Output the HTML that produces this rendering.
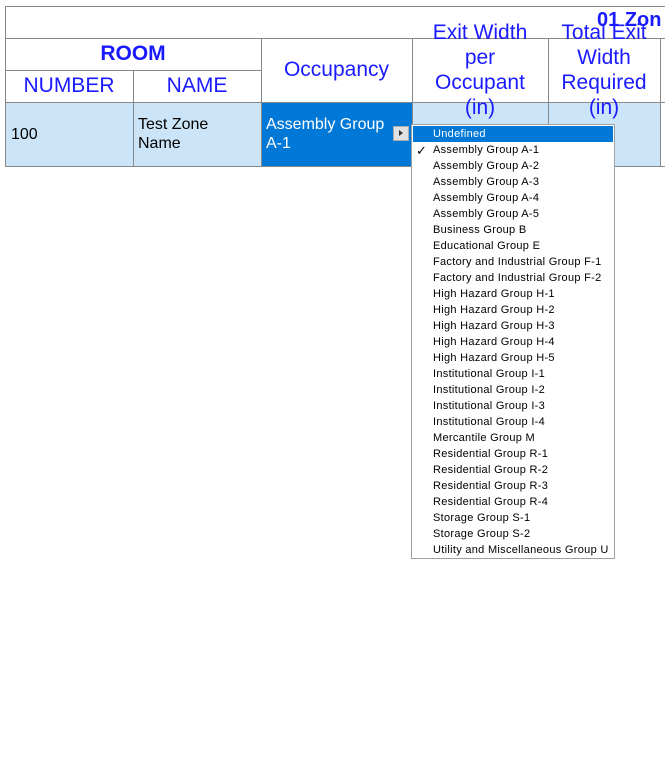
<!DOCTYPE html>
<html><head><meta charset="utf-8"><style>
*{margin:0;padding:0;box-sizing:border-box}
body{width:665px;height:762px;background:#fff;position:relative;overflow:hidden;font-family:"Liberation Sans",Arial,sans-serif}
.a{position:absolute}
.h{color:#1a1aff;font-size:21px;text-align:center;display:flex;align-items:center;justify-content:center}
.ln{position:absolute;background:#888}
.m{position:absolute;left:411px;top:124px;width:204px;height:435px;background:#fff;border:1px solid #a0a0a0}
.m div{height:16px;line-height:17px;padding-left:21px;font-size:11px;letter-spacing:0.3px;color:#000;position:relative}
.m .sel{background:#0078d7;color:#fff;margin:0 1px}
</style></head><body>
<div class="a" style="left:5px;top:102px;width:655px;height:64px;background:#cce4f7"></div>
<div class="a" style="left:261px;top:102px;width:151px;height:64px;background:#0078d7"></div>
<div class="ln" style="left:5px;top:6px;width:660px;height:1px"></div>
<div class="ln" style="left:5px;top:38px;width:660px;height:1px"></div>
<div class="ln" style="left:5px;top:70px;width:256px;height:1px"></div>
<div class="ln" style="left:5px;top:102px;width:660px;height:1px"></div>
<div class="ln" style="left:5px;top:166px;width:660px;height:1px"></div>
<div class="ln" style="left:5px;top:6px;width:1px;height:161px"></div>
<div class="ln" style="left:133px;top:70px;width:1px;height:97px"></div>
<div class="ln" style="left:261px;top:38px;width:1px;height:129px"></div>
<div class="ln" style="left:412px;top:38px;width:1px;height:129px"></div>
<div class="ln" style="left:548px;top:38px;width:1px;height:129px"></div>
<div class="ln" style="left:660px;top:38px;width:1px;height:129px"></div>
<div class="a" style="left:597px;top:9px;font-size:20px;font-weight:bold;color:#1a1aff;white-space:nowrap">01 Zon</div>
<div class="a h" style="left:5px;top:38px;width:256px;height:32px;font-weight:bold">ROOM</div>
<div class="a h" style="left:5px;top:70px;width:128px;height:32px">NUMBER</div>
<div class="a h" style="left:133px;top:70px;width:128px;height:32px">NAME</div>
<div class="a h" style="left:261px;top:38px;width:151px;height:64px">Occupancy</div>
<div class="a h" style="left:412px;top:20px;width:136px;height:100px;line-height:25px">Exit Width<br>per<br>Occupant<br>(in)</div>
<div class="a h" style="left:548px;top:20px;width:112px;height:100px;line-height:25px">Total Exit<br>Width<br>Required<br>(in)</div>
<div class="a" style="left:11px;top:126px;font-size:16px">100</div>
<div class="a" style="left:138px;top:115px;font-size:16px;line-height:19px">Test Zone<br>Name</div>
<div class="a" style="left:266px;top:115px;font-size:16px;line-height:19px;color:#fff">Assembly Group<br>A-1</div>
<div class="a" style="left:393px;top:126px;width:16px;height:15px;background:#e1e1e1;border:1px solid #adadad"></div>
<div class="a" style="left:399px;top:130px;width:0;height:0;border-left:4px solid #333;border-top:3.5px solid transparent;border-bottom:3.5px solid transparent"></div>
<div class="m"><div style="height:1px"></div>
<div class="sel" style="padding-left:20px">Undefined</div>
<div><span style="position:absolute;left:4px;top:0;font-size:13px">✓</span>Assembly Group A-1</div>
<div>Assembly Group A-2</div><div>Assembly Group A-3</div><div>Assembly Group A-4</div><div>Assembly Group A-5</div>
<div>Business Group B</div><div>Educational Group E</div>
<div>Factory and Industrial Group F-1</div><div>Factory and Industrial Group F-2</div>
<div>High Hazard Group H-1</div><div>High Hazard Group H-2</div><div>High Hazard Group H-3</div><div>High Hazard Group H-4</div><div>High Hazard Group H-5</div>
<div>Institutional Group I-1</div><div>Institutional Group I-2</div><div>Institutional Group I-3</div><div>Institutional Group I-4</div>
<div>Mercantile Group M</div>
<div>Residential Group R-1</div><div>Residential Group R-2</div><div>Residential Group R-3</div><div>Residential Group R-4</div>
<div>Storage Group S-1</div><div>Storage Group S-2</div>
<div>Utility and Miscellaneous Group U</div>
</div>
</body></html>
